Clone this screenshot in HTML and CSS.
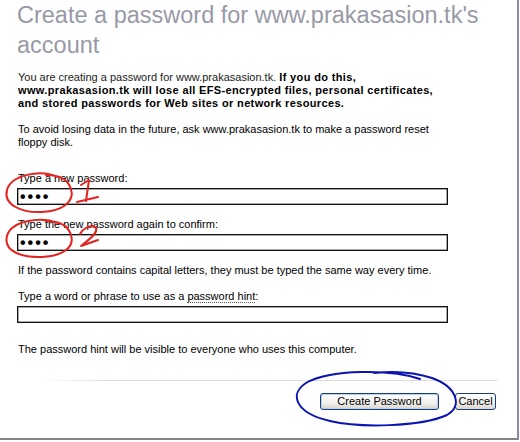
FILE: index.html
```html
<!DOCTYPE html>
<html lang="en">
  <head>
    <meta charset="UTF-8" />
    <title>Create a password</title>
    <link rel="stylesheet" href="styles.css">
  </head>
  <body>
    <div class="window">
      <h1 class="title">Create a password for www.prakasasion.tk's account</h1>

      <p class="intro">
        <span class="plain">You are creating a password for www.prakasasion.tk.</span>
        <b>If you do this,<br />www.prakasasion.tk will lose all EFS-encrypted files, personal certificates,<br />and stored passwords for Web sites or network resources.</b>
      </p>

      <p class="note">To avoid losing data in the future, ask www.prakasasion.tk to make a password reset<br />floppy disk.</p>

      <label class="field-label first" for="pw1">Type a new password:</label>
      <input class="field" id="pw1" type="password" value="pass" />

      <label class="field-label" for="pw2">Type the new password again to confirm:</label>
      <input class="field" id="pw2" type="password" value="pass" />

      <p class="hint-text">If the password contains capital letters, they must be typed the same way every time.</p>

      <label class="field-label" for="hint">Type a word or phrase to use as a <span class="link">password hint</span>:</label>
      <input class="field" id="hint" type="text" />

      <p class="hint-text bottom">The password hint will be visible to everyone who uses this computer.</p>

      <div class="separator"></div>

      <div class="buttons">
        <button class="btn default">Create Password</button>
        <button class="btn cancel">Cancel</button>
      </div>
    </div>

    <!-- hand drawn marks on top of the screenshot -->
    <svg class="marks" width="520" height="442" viewBox="0 0 520 442">
      <g fill="none" stroke="#e3231f" stroke-width="2" stroke-linecap="round" stroke-linejoin="round">
        <path d="M58 177 C40 169 11 175 7 190 C3 205 22 213 42 212 C62 211 75 202 71 189 C68 179 58 175 46 175" />
        <path d="M81 185 L89 180 L86 201 M77 202 L98 197" />
        <path d="M58 223 C40 216 11 221 7 236 C3 251 22 258 42 257 C62 256 75 248 71 235 C68 225 58 221 46 221" />
        <path d="M80 234 C84 227 93 224 96 228 C98 233 89 240 81 246 L98 240" />
      </g>
      <path fill="none" stroke="#0b14b0" stroke-width="2" stroke-linecap="round"
        d="M420 379 C392 369 330 369 306 383 C289 394 295 413 330 421 C360 428 420 427 447 415 C463 406 457 387 432 378 C414 372 392 371 374 373" />
    </svg>
  </body>
</html>
```

FILE: styles.css
```css
body {
  margin: 0;
  width: 520px;
  height: 442px;
  background: #ffffff;
  font-family: "Liberation Sans", Arial, sans-serif;
  font-size: 11px;
  color: #000000;
  position: relative;
  overflow: hidden;
}

.window {
  width: 517px;
  height: 438px;
  border-right: 2px solid #8d8aa3;
  border-bottom: 2px solid #858585;
  display: flex;
  flex-direction: column;
  align-items: flex-start;
}

.title {
  margin: 0 0 0 17px;
  font-size: 23.5px;
  line-height: 30px;
  font-weight: normal;
  color: #979aa6;
  width: 490px;
}

.intro,
.note,
.hint-text,
.field-label {
  margin: 0 0 0 18px;
  line-height: 13px;
}

.intro {
  margin-top: 11px;
}

.intro b {
  letter-spacing: 0.35px;
}

.plain {
  color: #222;
}

.note {
  margin-top: 13px;
}

.field-label {
  display: block;
  margin-top: 13px;
}

.field-label.first {
  margin-top: 23px;
}

.link {
  border-bottom: 1px dotted #555;
}

.field {
  margin: 3px 0 0 17px;
  width: 431px;
  height: 17px;
  box-sizing: border-box;
  border: 1px solid #111;
  box-shadow: inset 0 0 0 0.5px #555;
  padding: 0 2px;
  font-family: "Liberation Sans", Arial, sans-serif;
  font-size: 16px;
  font-weight: bold;
  letter-spacing: 2px;
  outline: none;
  background: #fff;
}

.hint-text {
  margin-top: 13px;
}

.hint-text.bottom {
  margin-top: 20px;
}

.separator {
  margin: 24px 0 0 40px;
  width: 457px;
  height: 1px;
  background: linear-gradient(to right, #ffffff, #dcdcdc 15%, #dcdcdc);
}

.buttons {
  margin: 12px 0 0 320px;
  display: flex;
  gap: 16px;
}

.btn {
  height: 17px;
  padding: 0;
  border: 1px solid #1c3f7a;
  border-radius: 3px;
  background: linear-gradient(#ffffff, #f2f1ec 60%, #d8d5cc);
  font-family: "Liberation Sans", Arial, sans-serif;
  font-size: 11px;
  line-height: 15px;
  color: #000;
}

.btn.default {
  width: 119px;
  box-shadow: inset 0 0 0 1px #b7cdf0;
}

.btn.cancel {
  width: 41px;
}

.marks {
  position: absolute;
  left: 0;
  top: 0;
  pointer-events: none;
}
```
